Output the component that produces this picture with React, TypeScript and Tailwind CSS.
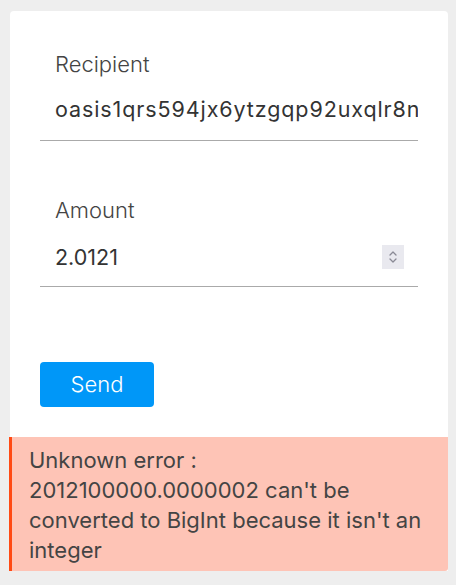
import React from "react";

const font = { fontFamily: "Inter, 'Noto Sans', sans-serif" };

export default function App() {
  return (
    <div className="min-h-[585px] w-[456px] bg-[#eeeeee] pt-[11px] pl-[10px] pr-[8px] pb-[13px]" style={font}>
      <div className="bg-white rounded-t-[4px]">
        <div className="px-[30px] pt-[38px]">
          {/* Recipient */}
          <div className="h-[30px] pl-[15px] text-[22px] leading-[30px] font-light text-[#444444]">Recipient</div>
          <div className="mt-[15px] border-b border-[#aaaaaa] pb-[16px] pl-[15px] overflow-hidden">
            <div className="h-[30px] whitespace-nowrap text-[21.5px] tracking-[0.9px] leading-[30px] text-[#333333] overflow-hidden">
              oasis1qrs594jx6ytzgqp92uxqlr8n5vwjrzavsqlmpaqwx
            </div>
          </div>
          {/* Amount */}
          <div className="mt-[54px] h-[30px] pl-[15px] text-[22px] leading-[30px] font-light text-[#444444]">Amount</div>
          <div className="mt-[17px] flex items-center border-b border-[#aaaaaa] pb-[14px] pl-[15px]">
            <div className="h-[30px] flex-1 text-[21.5px] leading-[30px] text-[#333333]">2.0121</div>
            <div className="mr-[14px] flex h-[24px] w-[22px] flex-col items-center justify-center bg-[#e9e9ef]">
              <svg width="10" height="16" viewBox="0 0 10 16" fill="none" stroke="#8a8a95" strokeWidth="1.3" strokeLinecap="round" strokeLinejoin="round">
                <path d="M2 6 L5 3 L8 6" />
                <path d="M2 10 L5 13 L8 10" />
              </svg>
            </div>
          </div>
          {/* Send */}
          <div className="pt-[75px] pb-[30px]">
            <button className="h-[45px] w-[114px] rounded-[4px] bg-[#0097f8] text-[22px] font-light text-white">Send</button>
          </div>
        </div>
        <div className="-ml-px rounded-br-[3px] border-l-[3px] border-[#ff4a14] bg-[#fec4b6] pl-[17px] pr-[20px] pt-[8px] pb-[6px] text-[22px] leading-[30px] text-[#444444]">
          Unknown error : 2012100000.0000002 can't be converted to BigInt because it isn't an integer
        </div>
      </div>
    </div>
  );
}
